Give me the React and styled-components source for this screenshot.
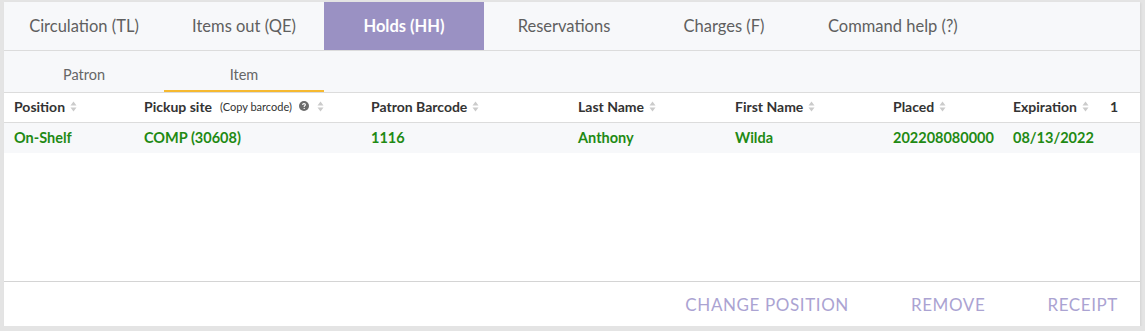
import React from "react";
import styled, { createGlobalStyle } from "styled-components";

const GlobalStyle = createGlobalStyle`
  html, body {
    margin: 0;
    padding: 0;
    background: #e4e4e4;
    font-family: "Lato", "Noto Sans", sans-serif;
  }
`;

const tabs = [
  "Circulation (TL)",
  "Items out (QE)",
  "Holds (HH)",
  "Reservations",
  "Charges (F)",
  "Command help (?)",
];

const columns = [
  { label: "Position", width: 130 },
  { label: "Pickup site", width: 227, note: "(Copy barcode)" },
  { label: "Patron Barcode", width: 207 },
  { label: "Last Name", width: 157 },
  { label: "First Name", width: 158 },
  { label: "Placed", width: 120 },
  { label: "Expiration", width: 97 },
];

const rows = [
  ["On-Shelf", "COMP (30608)", "1116", "Anthony", "Wilda", "202208080000", "08/13/2022"],
];

const gridTemplate = columns.map((c) => `${c.width}px`).join(" ") + " 1fr";

function SortIcon() {
  return (
    <SortSvg width="7" height="11" viewBox="0 0 7 11">
      <path d="M3.5 0.5 L6.5 4.5 L0.5 4.5 Z" fill="#cbcbcb" />
      <path d="M3.5 10.5 L6.5 6.5 L0.5 6.5 Z" fill="#cbcbcb" />
    </SortSvg>
  );
}

function HelpIcon() {
  return (
    <HelpSvg width="10" height="10" viewBox="0 0 10 10">
      <circle cx="5" cy="5" r="5" fill="#6b6b6b" />
      <path
        d="M3.6 3.9 C3.6 3.1 4.2 2.6 5 2.6 C5.8 2.6 6.4 3.1 6.4 3.8 C6.4 4.6 5.4 4.7 5.2 5.5 L5.2 5.9"
        stroke="#fff"
        strokeWidth="1.1"
        fill="none"
      />
      <circle cx="5.2" cy="7.4" r="0.65" fill="#fff" />
    </HelpSvg>
  );
}

function App() {
  return (
    <>
      <GlobalStyle />
      <Card>
        <TabBar>
          {tabs.map((t) => (
            <Tab key={t} active={t === "Holds (HH)"}>
              {t}
            </Tab>
          ))}
        </TabBar>
        <SubTabBar>
          <SubTab>Patron</SubTab>
          <SubTab active>Item</SubTab>
        </SubTabBar>
        <HeaderRow>
          {columns.map((c) => (
            <HeaderCell key={c.label}>
              {c.label}
              {c.note && (
                <>
                  <Note>{c.note}</Note>
                  <HelpIcon />
                </>
              )}
              <SortIcon />
            </HeaderCell>
          ))}
          <HeaderCell>1</HeaderCell>
        </HeaderRow>
        <Body>
          {rows.map((r, i) => (
            <DataRow key={i}>
              {r.map((v, j) => (
                <DataCell key={j}>{v}</DataCell>
              ))}
              <DataCell />
            </DataRow>
          ))}
        </Body>
        <Footer>
          <ActionButton>Change position</ActionButton>
          <ActionButton>Remove</ActionButton>
          <ActionButton>Receipt</ActionButton>
        </Footer>
      </Card>
    </>
  );
}

const Card = styled.div`
  margin: 2px 5px 0 4px;
  height: 324px;
  background: #fff;
  display: flex;
  flex-direction: column;
  box-shadow: 1px 1px 2px rgba(0, 0, 0, 0.08);
`;

const TabBar = styled.div`
  display: flex;
  height: 48px;
  background: #f7f8fa;
  border-bottom: 1px solid #dcdcdc;
`;

const Tab = styled.div`
  min-width: 160px;
  box-sizing: border-box;
  padding: 0 24px;
  display: flex;
  align-items: center;
  justify-content: center;
  font-size: 16.5px;
  color: #5f5f5f;
  ${(p) =>
    p.active &&
    `
    color: #fff;
    font-weight: 700;
    background: #9a91c3;
  `}
`;

const SubTabBar = styled.div`
  display: flex;
  height: 41px;
  background: #f7f8fa;
  border-bottom: 1px solid #dcdcdc;
`;

const SubTab = styled.div`
  width: 160px;
  box-sizing: border-box;
  display: flex;
  align-items: flex-end;
  justify-content: center;
  padding-bottom: 7px;
  font-size: 14.5px;
  color: #666;
  border-bottom: 2px solid ${(p) => (p.active ? "#f6b930" : "transparent")};
`;

const HeaderRow = styled.div`
  display: grid;
  grid-template-columns: ${gridTemplate};
  height: 29px;
  border-bottom: 1px solid #dcdcdc;
`;

const HeaderCell = styled.div`
  display: flex;
  align-items: center;
  gap: 5px;
  padding-left: 10px;
  padding-bottom: 3px;
  font-size: 14px;
  font-weight: 700;
  color: #333;
`;

const Note = styled.span`
  font-size: 11px;
  font-weight: 400;
  color: #333;
  margin-left: 3px;
`;

const HelpSvg = styled.svg`
  margin-left: 2px;
`;

const SortSvg = styled.svg`
  ${HelpSvg} + & {
    margin-left: 3px;
  }
`;

const Body = styled.div`
  flex: 1;
  border-bottom: 1px solid #d4d4d4;
`;

const DataRow = styled.div`
  display: grid;
  grid-template-columns: ${gridTemplate};
  height: 30px;
  background: #f7f8fa;
`;

const DataCell = styled.div`
  display: flex;
  align-items: center;
  padding-left: 10px;
  padding-bottom: 1px;
  font-size: 14.5px;
  font-weight: 700;
  color: #1f8a14;
`;

const Footer = styled.div`
  height: 44px;
  display: flex;
  justify-content: flex-end;
  align-items: center;
  gap: 62px;
  padding-right: 22px;
`;

const ActionButton = styled.button`
  border: none;
  background: none;
  padding: 0;
  font-family: "Lato", "Noto Sans", sans-serif;
  font-size: 17px;
  letter-spacing: 0.6px;
  text-transform: uppercase;
  color: #aba3d2;
  cursor: pointer;
`;

export default App;
